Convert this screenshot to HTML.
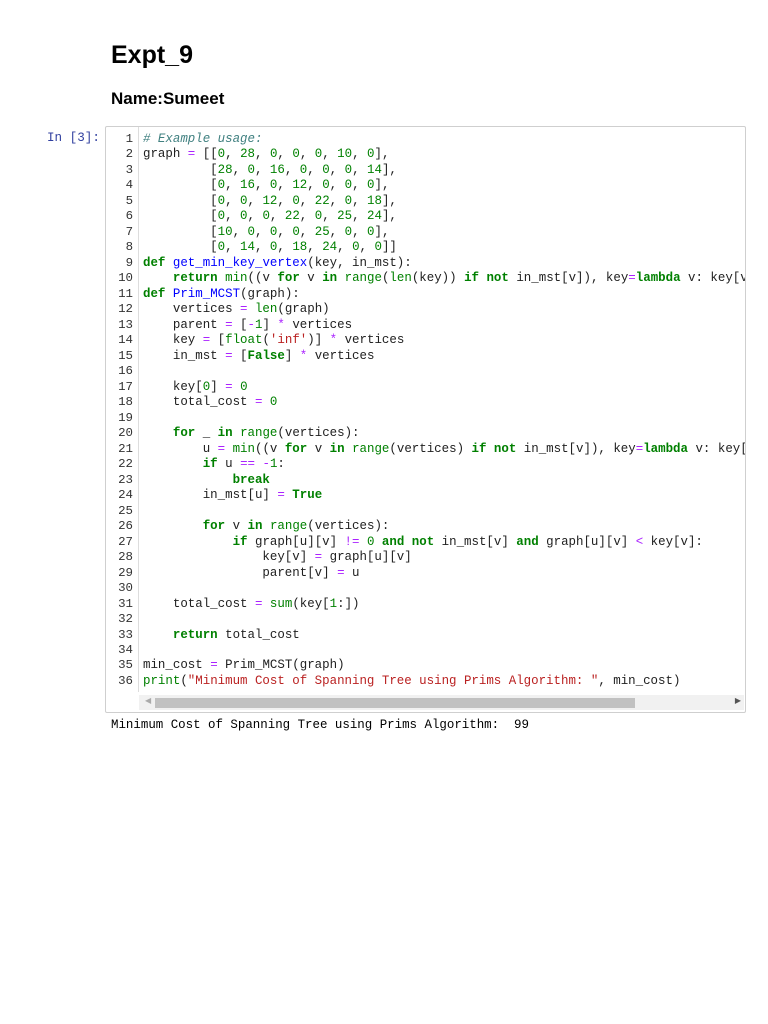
<!DOCTYPE html>
<html><head><meta charset="utf-8"><style>
html,body{margin:0;padding:0;background:#fff;width:768px;height:1024px;overflow:hidden}
body{position:relative;font-family:"Liberation Sans",sans-serif}
h1{position:absolute;left:111px;top:41px;margin:0;font-size:25px;font-weight:bold;color:#000}
h2{position:absolute;left:111px;top:89px;margin:0;font-size:17px;font-weight:bold;color:#000}
.prompt{position:absolute;left:47px;top:131px;font-family:"Liberation Mono",monospace;font-size:12.6px;color:#303f9f}
.cell{position:absolute;left:105px;top:126px;width:639px;height:585px;border:1px solid #cfcfcf;border-radius:2px;background:#fff;overflow:hidden}
.gut{position:absolute;left:0;top:5px;width:27px;text-align:right;font-family:"Liberation Mono",monospace;font-size:12.4px;line-height:15.49px;color:#333}
.sep{position:absolute;left:32px;top:0;width:1px;height:565px;background:#ddd}
pre{position:absolute;left:37px;top:5px;margin:0;font-family:"Liberation Mono",monospace;font-size:12.45px;line-height:15.49px;color:#212121;white-space:pre}
.k{color:#008000;font-weight:bold}.b{color:#008000}.n{color:#008000}.s{color:#ba2121}.c{color:#408080;font-style:italic}.o{color:#aa22ff}.f{color:#0000ff}.ob{color:#008000;font-weight:bold}
.sb{position:absolute;left:33px;top:568px;width:605px;height:15px;background:#f1f1f1}
.thumb{position:absolute;left:16px;top:3px;width:480px;height:10px;background:#c1c1c1}
.out{position:absolute;left:111px;top:718px;font-family:"Liberation Mono",monospace;font-size:12.45px;color:#000;white-space:pre}
</style></head><body>
<h1>Expt_9</h1>
<h2>Name:Sumeet</h2>
<div class="prompt">In [3]:</div>
<div class="cell">
<div class="gut">1<br>2<br>3<br>4<br>5<br>6<br>7<br>8<br>9<br>10<br>11<br>12<br>13<br>14<br>15<br>16<br>17<br>18<br>19<br>20<br>21<br>22<br>23<br>24<br>25<br>26<br>27<br>28<br>29<br>30<br>31<br>32<br>33<br>34<br>35<br>36</div>
<div class="sep"></div>
<pre><span class="c"># Example usage:</span>
graph <span class="o">=</span> [[<span class="n">0</span>, <span class="n">28</span>, <span class="n">0</span>, <span class="n">0</span>, <span class="n">0</span>, <span class="n">10</span>, <span class="n">0</span>],
         [<span class="n">28</span>, <span class="n">0</span>, <span class="n">16</span>, <span class="n">0</span>, <span class="n">0</span>, <span class="n">0</span>, <span class="n">14</span>],
         [<span class="n">0</span>, <span class="n">16</span>, <span class="n">0</span>, <span class="n">12</span>, <span class="n">0</span>, <span class="n">0</span>, <span class="n">0</span>],
         [<span class="n">0</span>, <span class="n">0</span>, <span class="n">12</span>, <span class="n">0</span>, <span class="n">22</span>, <span class="n">0</span>, <span class="n">18</span>],
         [<span class="n">0</span>, <span class="n">0</span>, <span class="n">0</span>, <span class="n">22</span>, <span class="n">0</span>, <span class="n">25</span>, <span class="n">24</span>],
         [<span class="n">10</span>, <span class="n">0</span>, <span class="n">0</span>, <span class="n">0</span>, <span class="n">25</span>, <span class="n">0</span>, <span class="n">0</span>],
         [<span class="n">0</span>, <span class="n">14</span>, <span class="n">0</span>, <span class="n">18</span>, <span class="n">24</span>, <span class="n">0</span>, <span class="n">0</span>]]
<span class="k">def</span> <span class="f">get_min_key_vertex</span>(key, in_mst):
    <span class="k">return</span> <span class="b">min</span>((v <span class="k">for</span> v <span class="ob">in</span> <span class="b">range</span>(<span class="b">len</span>(key)) <span class="k">if</span> <span class="ob">not</span> in_mst[v]), key<span class="o">=</span><span class="k">lambda</span> v: key[v]])
<span class="k">def</span> <span class="f">Prim_MCST</span>(graph):
    vertices <span class="o">=</span> <span class="b">len</span>(graph)
    parent <span class="o">=</span> [<span class="o">-</span><span class="n">1</span>] <span class="o">*</span> vertices
    key <span class="o">=</span> [<span class="b">float</span>(<span class="s">'inf'</span>)] <span class="o">*</span> vertices
    in_mst <span class="o">=</span> [<span class="k">False</span>] <span class="o">*</span> vertices

    key[<span class="n">0</span>] <span class="o">=</span> <span class="n">0</span>
    total_cost <span class="o">=</span> <span class="n">0</span>

    <span class="k">for</span> _ <span class="ob">in</span> <span class="b">range</span>(vertices):
        u <span class="o">=</span> <span class="b">min</span>((v <span class="k">for</span> v <span class="ob">in</span> <span class="b">range</span>(vertices) <span class="k">if</span> <span class="ob">not</span> in_mst[v]), key<span class="o">=</span><span class="k">lambda</span> v: key[v])
        <span class="k">if</span> u <span class="o">==</span> <span class="o">-</span><span class="n">1</span>:
            <span class="k">break</span>
        in_mst[u] <span class="o">=</span> <span class="k">True</span>

        <span class="k">for</span> v <span class="ob">in</span> <span class="b">range</span>(vertices):
            <span class="k">if</span> graph[u][v] <span class="o">!=</span> <span class="n">0</span> <span class="ob">and</span> <span class="ob">not</span> in_mst[v] <span class="ob">and</span> graph[u][v] <span class="o">&lt;</span> key[v]:
                key[v] <span class="o">=</span> graph[u][v]
                parent[v] <span class="o">=</span> u

    total_cost <span class="o">=</span> <span class="b">sum</span>(key[<span class="n">1</span>:])

    <span class="k">return</span> total_cost

min_cost <span class="o">=</span> Prim_MCST(graph)
<span class="b">print</span>(<span class="s">"Minimum Cost of Spanning Tree using Prims Algorithm: "</span>, min_cost)</pre>
<div class="sb"><span style="position:absolute;left:6px;top:1px;font-size:8px;color:#aaa">◀</span><div class="thumb"></div><span style="position:absolute;right:3px;top:1px;font-size:8px;color:#555">▶</span></div>
</div>
<div class="out">Minimum Cost of Spanning Tree using Prims Algorithm:  99</div>
</body></html>
